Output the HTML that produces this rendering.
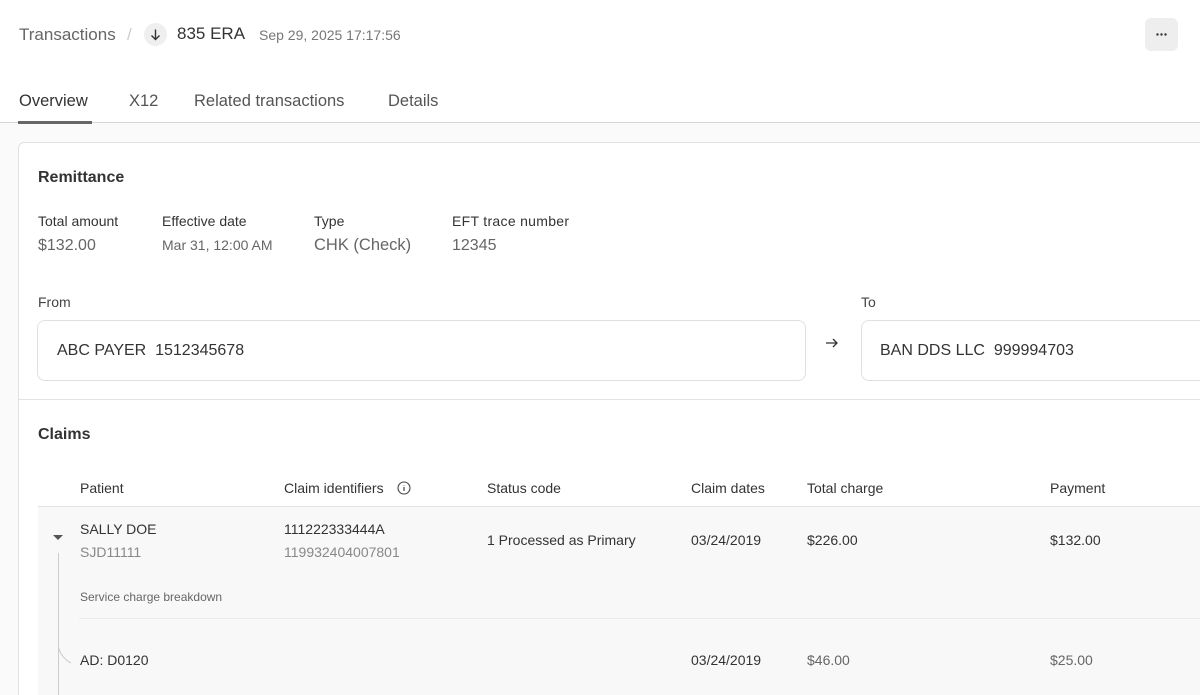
<!DOCTYPE html>
<html><head><meta charset="utf-8"><style>
*{margin:0;padding:0;box-sizing:border-box}
html,body{width:1200px;height:695px;overflow:hidden}
body{background:#fff;font-family:"Liberation Sans",sans-serif;color:#333}
#w{position:relative;width:1200px;height:695px;overflow:hidden}
.a{position:absolute;white-space:nowrap}
.g{color:#666}
</style></head><body><div id="w">
<div class="a" style="left:19px;top:25px;font-size:17px;color:#666">Transactions</div>
<div class="a" style="left:127px;top:25px;font-size:17px;color:#ccc">/</div>
<div class="a" style="left:144px;top:23px;width:23px;height:23px;border-radius:50%;background:#efefef"></div>
<svg class="a" style="left:144px;top:23px" width="23" height="23" viewBox="0 0 23 23"><path d="M11.5 6.5v10M7.5 12.5l4 4 4-4" stroke="#333" stroke-width="1.4" fill="none"/></svg>
<div class="a" style="left:177px;top:24px;font-size:17px;color:#333">835 ERA</div>
<div class="a" style="left:259px;top:27px;font-size:14px;color:#777">Sep 29, 2025 17:17:56</div>
<div class="a" style="left:1145px;top:18px;width:33px;height:33px;border-radius:6px;background:#eee"></div>
<svg class="a" style="left:1145px;top:18px" width="33" height="33"><circle cx="12.5" cy="16.5" r="1.2" fill="#333"/><circle cx="16.5" cy="16.5" r="1.2" fill="#333"/><circle cx="20.5" cy="16.5" r="1.2" fill="#333"/></svg>

<div class="a" style="left:19px;top:92px;font-size:16.5px;color:#333">Overview</div>
<div class="a" style="left:129px;top:92px;font-size:16.5px;color:#555">X12</div>
<div class="a" style="left:194px;top:92px;font-size:16.5px;color:#555">Related transactions</div>
<div class="a" style="left:388px;top:92px;font-size:16.5px;color:#555">Details</div>
<div class="a" style="left:0;top:122px;width:1200px;height:573px;background:#fafafa;border-top:1px solid #d6d6d6"></div>
<div class="a" style="left:18px;top:121px;width:74px;height:3px;background:#666"></div>

<div class="a" style="left:18px;top:142px;width:1182px;height:553px;background:#fff;border:1px solid #e2e2e2;border-right:none;border-bottom:none;border-radius:6px 0 0 0"></div>
<div class="a" style="left:38px;top:169px;font-size:16px;font-weight:bold;color:#333">Remittance</div>
<div class="a" style="left:38px;top:213px;font-size:14px;color:#333">Total amount</div>
<div class="a g" style="left:38px;top:237px;font-size:16px">$132.00</div>
<div class="a" style="left:162px;top:213px;font-size:14px;color:#333">Effective date</div>
<div class="a g" style="left:162px;top:237px;font-size:14px">Mar 31, 12:00 AM</div>
<div class="a" style="left:314px;top:213px;font-size:14px;color:#333">Type</div>
<div class="a g" style="left:314px;top:236px;font-size:16.5px">CHK (Check)</div>
<div class="a" style="left:452px;top:213px;font-size:14px;color:#333;letter-spacing:0.3px">EFT trace number</div>
<div class="a g" style="left:452px;top:237px;font-size:16px">12345</div>
<div class="a" style="left:38px;top:294px;font-size:14px;color:#444">From</div>
<div class="a" style="left:861px;top:294px;font-size:14px;color:#444">To</div>
<div class="a" style="left:37px;top:320px;width:769px;height:61px;border:1px solid #e0e0e0;border-radius:8px;background:#fff"></div>
<div class="a" style="left:57px;top:342px;font-size:16px;color:#333">ABC PAYER&nbsp; 1512345678</div>
<svg class="a" style="left:824px;top:335px" width="16" height="16" viewBox="0 0 16 16"><path d="M2 8h11M9 4l4 4-4 4" stroke="#333" stroke-width="1.3" fill="none"/></svg>
<div class="a" style="left:861px;top:320px;width:339px;height:61px;border:1px solid #e0e0e0;border-right:none;border-radius:8px 0 0 8px;background:#fff"></div>
<div class="a" style="left:880px;top:342px;font-size:16px;color:#333">BAN DDS LLC&nbsp; 999994703</div>
<div class="a" style="left:19px;top:399px;width:1181px;height:1px;background:#e2e2e2"></div>

<div class="a" style="left:38px;top:426px;font-size:16px;font-weight:bold;color:#333">Claims</div>
<div class="a" style="left:80px;top:480px;font-size:14px">Patient</div>
<div class="a" style="left:284px;top:480px;font-size:14px">Claim identifiers</div>
<svg class="a" style="left:397px;top:481px" width="14" height="14" viewBox="0 0 14 14"><circle cx="7" cy="7" r="6" stroke="#444" fill="none" stroke-width="1.1"/><path d="M7 6v4M7 4v.5" stroke="#444" stroke-width="1.2"/></svg>
<div class="a" style="left:487px;top:480px;font-size:14px">Status code</div>
<div class="a" style="left:691px;top:480px;font-size:14px">Claim dates</div>
<div class="a" style="left:807px;top:480px;font-size:14px">Total charge</div>
<div class="a" style="left:1050px;top:480px;font-size:14px">Payment</div>
<div class="a" style="left:38px;top:506px;width:1162px;height:189px;background:#f8f8f8;border-top:1px solid #e2e2e2"></div>
<div class="a" style="left:53px;top:535px;width:0;height:0;border-left:5px solid transparent;border-right:5px solid transparent;border-top:5px solid #555"></div>
<div class="a" style="left:58px;top:553px;width:1px;height:142px;background:#ccc"></div>
<svg class="a" style="left:58px;top:645px" width="14" height="20"><path d="M0 0q2 12 13 18" stroke="#ccc" fill="none"/></svg>
<div class="a" style="left:80px;top:521px;font-size:14px;color:#333">SALLY DOE</div>
<div class="a g" style="left:80px;top:544px;font-size:14px;color:#888">SJD11111</div>
<div class="a" style="left:284px;top:521px;font-size:14px;color:#333">111222333444A</div>
<div class="a" style="left:284px;top:544px;font-size:14px;color:#888">119932404007801</div>
<div class="a" style="left:487px;top:532px;font-size:14px">1 Processed as Primary</div>
<div class="a" style="left:691px;top:532px;font-size:14px">03/24/2019</div>
<div class="a" style="left:807px;top:532px;font-size:14px">$226.00</div>
<div class="a" style="left:1050px;top:532px;font-size:14px">$132.00</div>
<div class="a" style="left:80px;top:590px;font-size:12px;color:#666">Service charge breakdown</div>
<div class="a" style="left:79px;top:618px;width:1121px;height:1px;background:#ebebeb"></div>
<div class="a" style="left:80px;top:652px;font-size:14px;color:#333">AD: D0120</div>
<div class="a" style="left:691px;top:652px;font-size:14px">03/24/2019</div>
<div class="a" style="left:807px;top:652px;font-size:14px;color:#666">$46.00</div>
<div class="a" style="left:1050px;top:652px;font-size:14px;color:#666">$25.00</div>
</div></body></html>
